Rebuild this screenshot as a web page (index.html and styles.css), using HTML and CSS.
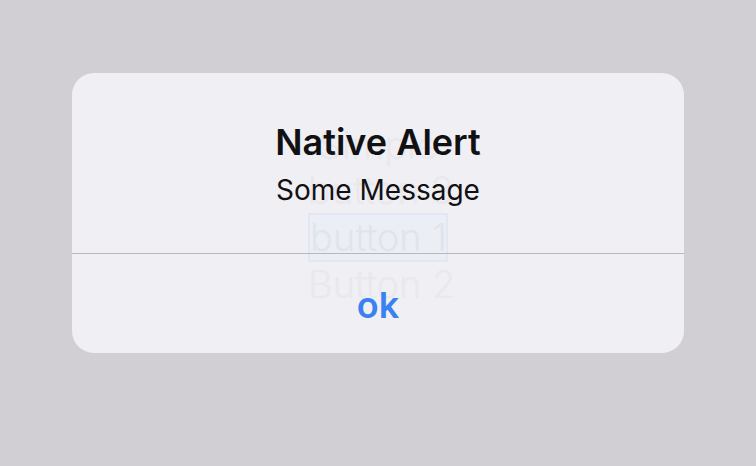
FILE: index.html
```html
<!DOCTYPE html>
<html>
<head>
<meta charset="utf-8">
<link rel="stylesheet" href="styles.css">
</head>
<body>
  <div class="alert">
    <div class="ghost" aria-hidden="true">
      <div class="ghost-item">Simple</div>
      <div class="ghost-item">button 3</div>
      <div class="ghost-item ghost-box">button 1</div>
      <div class="ghost-item">Button 2</div>
    </div>
    <div class="alert-body">
      <div class="alert-title">Native Alert</div>
      <div class="alert-message">Some Message</div>
    </div>
    <div class="alert-actions">
      <div class="alert-button">ok</div>
    </div>
  </div>
</body>
</html>
```

FILE: styles.css
```css
html, body {
  margin: 0;
  padding: 0;
}
body {
  width: 756px;
  height: 466px;
  background: #d1cfd3;
  font-family: Inter, "Noto Sans", "Liberation Sans", sans-serif;
  display: flex;
  justify-content: center;
  align-items: flex-start;
  overflow: hidden;
}
.alert {
  position: relative;
  margin-top: 73px;
  width: 612px;
  height: 280px;
  border-radius: 22px;
  background: #f0eff3;
  display: flex;
  flex-direction: column;
  overflow: hidden;
}
.ghost {
  position: absolute;
  left: 0;
  right: 0;
  top: 50px;
  display: flex;
  flex-direction: column;
  align-items: center;
  color: #e9e8ec;
  font-size: 38px;
  font-weight: 300;
  line-height: 45px;
  white-space: nowrap;
}
.ghost-item {
  width: 140px;
  text-align: center;
  box-sizing: border-box;
}
.ghost-box {
  background: #ebeef5;
  border: 2px solid #e2e8f3;
  color: #e1e4eb;
}
.alert-body {
  position: relative;
  height: 181px;
  box-sizing: border-box;
  padding-top: 47px;
  display: flex;
  flex-direction: column;
  align-items: center;
  border-bottom: 1px solid #b9b7bc;
}
.alert-title {
  font-size: 36px;
  font-weight: 600;
  color: #111113;
  line-height: 44px;
}
.alert-message {
  margin-top: 9px;
  font-size: 28px;
  font-weight: 400;
  color: #111113;
  line-height: 34px;
}
.alert-actions {
  position: relative;
  flex: 1;
  display: flex;
  align-items: center;
  justify-content: center;
}
.alert-button {
  font-size: 36px;
  font-weight: 600;
  color: #3a82f0;
  line-height: 42px;
  margin-top: 2px;
}
```
